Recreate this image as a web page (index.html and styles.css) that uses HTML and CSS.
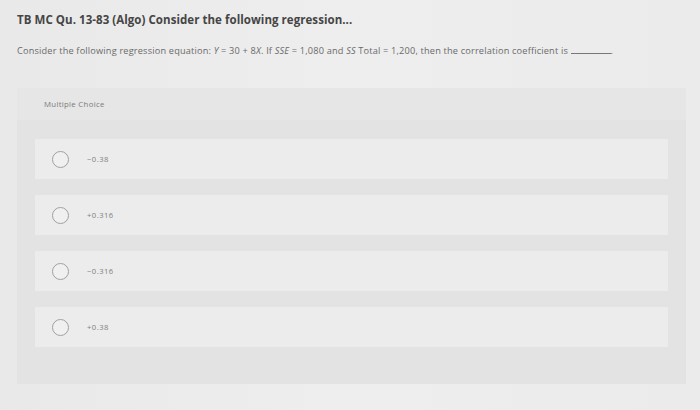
FILE: index.html
```html
<!DOCTYPE html>
<html>
<head>
<meta charset="utf-8">
<link rel="stylesheet" href="styles.css">
</head>
<body>
<div class="page">
  <h1 class="title">TB MC Qu. 13-83 (Algo) Consider the following regression...</h1>
  <p class="question">Consider the following regression equation: <i>Y</i> = 30 + 8<i>X</i>. If <i>SSE</i> = 1,080 and <i>SS</i> Total = 1,200, then the correlation coefficient is <span class="blank"></span>.</p>
  <div class="panel">
    <div class="panel-head">Multiple Choice</div>
    <div class="options">
      <div class="option"><span class="radio"></span><span class="label">−0.38</span></div>
      <div class="option"><span class="radio"></span><span class="label">+0.316</span></div>
      <div class="option"><span class="radio"></span><span class="label">−0.316</span></div>
      <div class="option"><span class="radio"></span><span class="label">+0.38</span></div>
    </div>
  </div>
</div>
</body>
</html>
```
FILE: styles.css
```css
html, body {
  margin: 0;
  padding: 0;
}
body {
  width: 700px;
  height: 410px;
  background: linear-gradient(90deg, #e9e9e9 0%, #eeeeee 50%, #ebebeb 100%);
  font-family: "Open Sans", "Liberation Sans", sans-serif;
  overflow: hidden;
}
.page {
  padding: 12px 13px 0 17px;
}
.title {
  margin: 0;
  font-size: 11.5px;
  font-weight: 700;
  color: #454545;
  line-height: 16px;
  letter-spacing: 0.05px;
}
.question {
  margin: 16px 0 0 0;
  font-size: 9.2px;
  letter-spacing: 0.18px;
  color: #6a6a6a;
  line-height: 14px;
}
.blank {
  display: inline-block;
  width: 40px;
  border-bottom: 1px solid #777;
  vertical-align: baseline;
}
.panel {
  margin-top: 30px;
  width: 669px;
  height: 296px;
  background: #e3e3e3;
  box-sizing: border-box;
}
.panel-head {
  height: 32px;
  padding-left: 27px;
  font-size: 7.8px;
  letter-spacing: 0.3px;
  line-height: 32px;
  color: #7a7a7a;
  background: #e6e6e6;
}
.options {
  display: flex;
  flex-direction: column;
  gap: 16px;
  padding: 19px 18px 0 18px;
}
.option {
  height: 40px;
  display: flex;
  align-items: center;
  background: #ececec;
}
.radio {
  width: 17px;
  height: 17px;
  border: 1px solid #a0a0a0;
  border-radius: 50%;
  margin-left: 17px;
  box-sizing: border-box;
  background: #f0f0f0;
}
.label {
  margin-left: 18px;
  font-size: 7.6px;
  letter-spacing: 0.5px;
  color: #808080;
}
```
